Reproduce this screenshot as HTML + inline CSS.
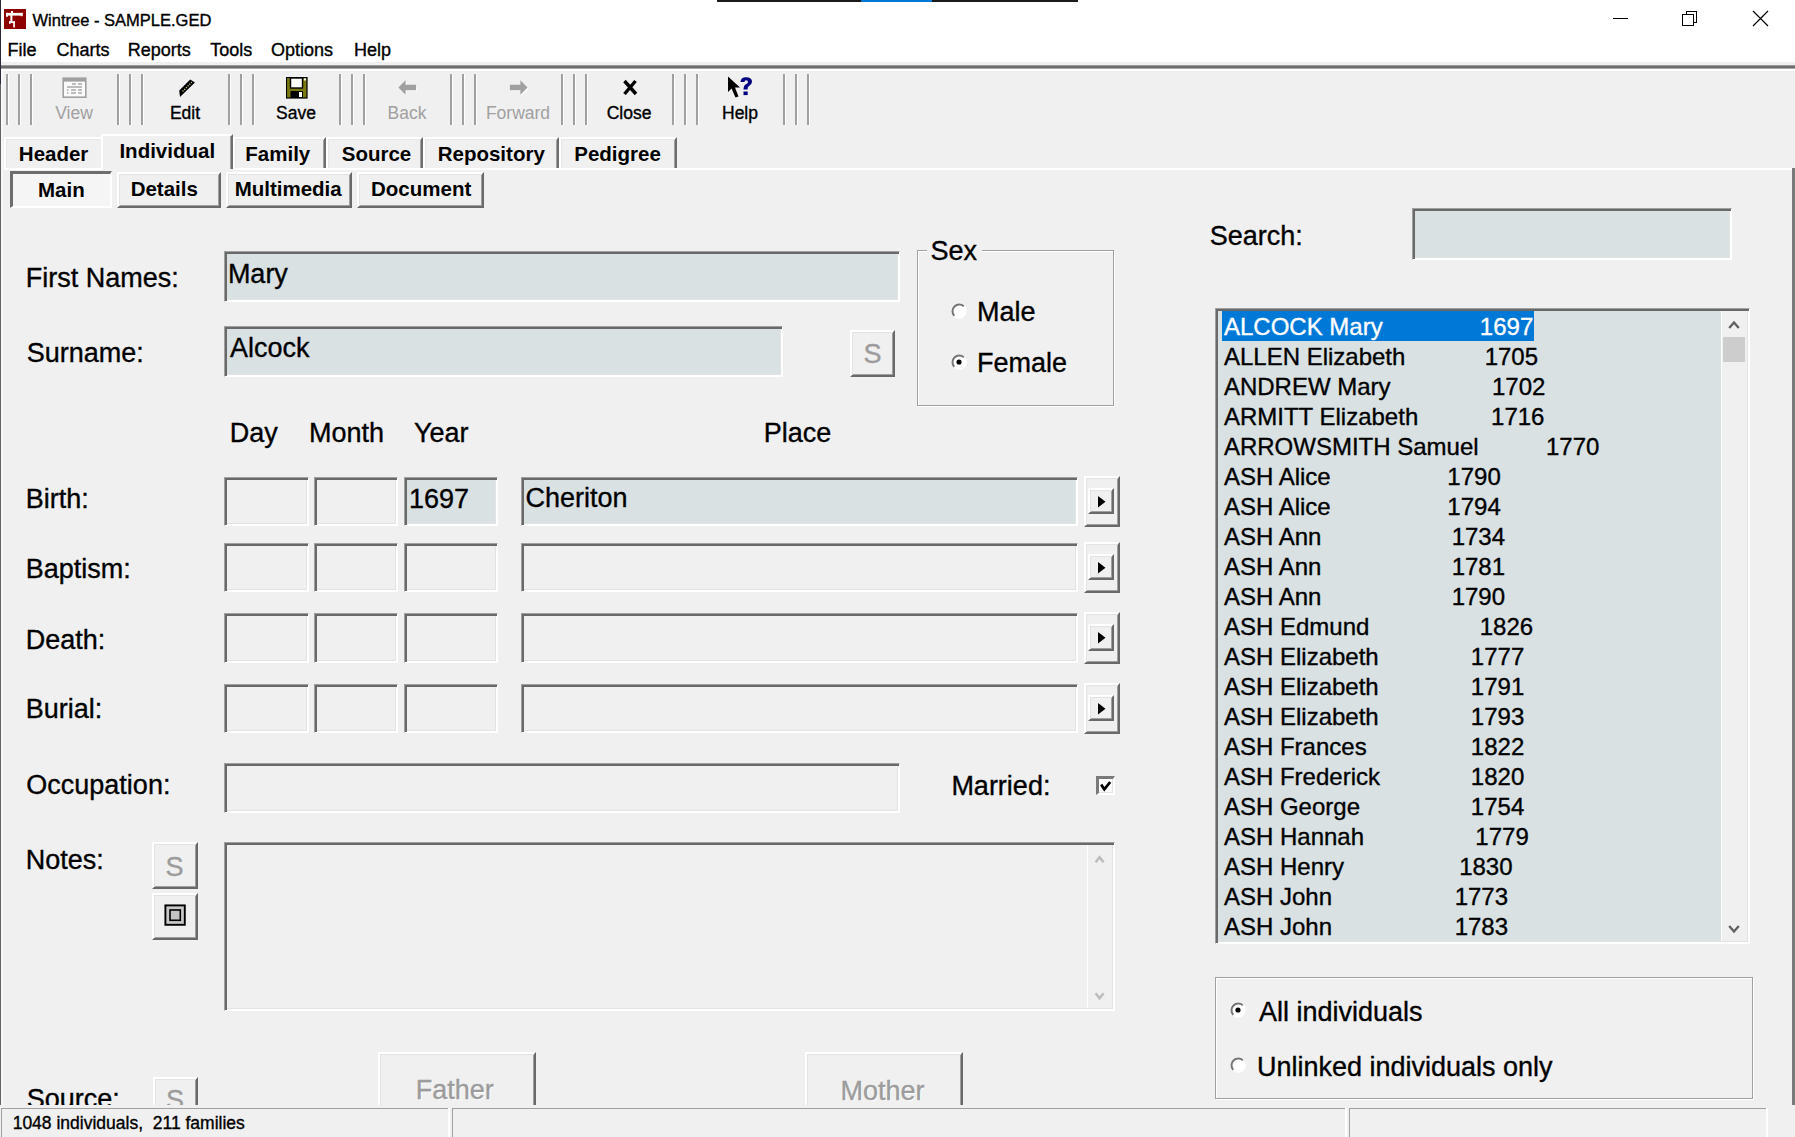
<!DOCTYPE html>
<html><head><meta charset="utf-8"><style>
*{box-sizing:border-box;margin:0;padding:0}
html,body{width:1795px;height:1137px;overflow:hidden}
body{position:relative;background:#f0f0f0;font-family:"Liberation Sans",sans-serif;color:#000}
.a{position:absolute}
.t{position:absolute;white-space:pre;line-height:1;-webkit-text-stroke:0.35px currentColor}
.sk{position:absolute;border:1px solid;border-color:#a0a0a0 #fff #fff #a0a0a0;box-shadow:inset 2px 2px 0 #696969,inset -1px -1px 0 #fff,inset -2px -2px 0 #e3e3e3}
.rs{position:absolute;border:2px solid;border-color:#fff #696969 #696969 #fff;box-shadow:inset 1px 1px 0 #e3e3e3,inset -1px -1px 0 #a0a0a0}
.grip{position:absolute;top:74px;width:2px;height:51px;background:#a0a0a0;box-shadow:1px 0 0 #fff}
</style></head><body>
<div class="a" style="left:0px;top:0px;width:1795px;height:62px;background:#fff"></div>
<div class="a" style="left:717px;top:0px;width:361px;height:2px;background:#1a1a1a"></div>
<div class="a" style="left:861px;top:0px;width:71px;height:2px;background:#0078d7"></div>
<div class="a" style="left:0px;top:65px;width:1795px;height:1px;background:#9a9a9a"></div>
<div class="a" style="left:0px;top:66px;width:1795px;height:2px;background:#6d6d6d"></div>
<div class="a" style="left:0px;top:68px;width:1795px;height:1px;background:#a8a8a8"></div>
<div class="a" style="left:0px;top:69px;width:1795px;height:2px;background:#fff"></div>
<div class="a" style="left:0px;top:0px;width:1px;height:84px;background:#2a2a3a"></div>
<div class="a" style="left:0px;top:84px;width:1px;height:1053px;background:#636363"></div>
<div class="a" style="left:1px;top:71px;width:2px;height:1034px;background:#f8f8f8"></div>
<div class="a" style="left:4px;top:9px;width:22px;height:20px;background:#8e0000"></div>
<svg class="a" style="left:4px;top:9px" width="22" height="20" viewBox="0 0 22 20" fill="#fff"><rect x="2" y="3.9" width="16.6" height="2.7"/><rect x="2" y="3.9" width="2" height="3.8"/><rect x="16.6" y="3.9" width="2" height="3.3"/><rect x="7" y="2" width="2" height="2.5"/><rect x="6.4" y="4" width="2" height="9.5"/><rect x="5" y="12.3" width="5.8" height="1.8"/><rect x="5" y="12.3" width="1.6" height="2.4"/><rect x="9.2" y="12.3" width="1.7" height="6.2"/></svg>
<div class="t" style="left:32.53px;top:12.00px;font-size:16.5px;">Wintree - SAMPLE.GED</div>
<div class="a" style="left:1613px;top:18px;width:15px;height:1px;background:#000"></div>
<div class="a" style="left:1686px;top:11px;width:11px;height:12px;border:1px solid #000"></div>
<div class="a" style="left:1682px;top:14px;width:12px;height:12px;border:1px solid #000;background:#fff"></div>
<svg class="a" style="left:1752px;top:10px" width="17" height="17" viewBox="0 0 17 17"><path d="M1 1L16 16M16 1L1 16" stroke="#000" stroke-width="1.2"/></svg>
<div class="t" style="left:7.42px;top:41.00px;font-size:18px;">File</div>
<div class="t" style="left:56.59px;top:41.00px;font-size:18px;">Charts</div>
<div class="t" style="left:127.72px;top:41.00px;font-size:18px;">Reports</div>
<div class="t" style="left:210.20px;top:41.00px;font-size:18px;">Tools</div>
<div class="t" style="left:271.05px;top:41.00px;font-size:18px;">Options</div>
<div class="t" style="left:353.92px;top:41.00px;font-size:18px;">Help</div>
<div class="grip" style="left:6px"></div>
<div class="grip" style="left:18px"></div>
<div class="grip" style="left:30px"></div>
<div class="grip" style="left:117px"></div>
<div class="grip" style="left:129px"></div>
<div class="grip" style="left:141px"></div>
<div class="grip" style="left:228px"></div>
<div class="grip" style="left:240px"></div>
<div class="grip" style="left:252px"></div>
<div class="grip" style="left:339px"></div>
<div class="grip" style="left:351px"></div>
<div class="grip" style="left:363px"></div>
<div class="grip" style="left:450px"></div>
<div class="grip" style="left:462px"></div>
<div class="grip" style="left:474px"></div>
<div class="grip" style="left:561px"></div>
<div class="grip" style="left:573px"></div>
<div class="grip" style="left:585px"></div>
<div class="grip" style="left:672px"></div>
<div class="grip" style="left:684px"></div>
<div class="grip" style="left:696px"></div>
<div class="grip" style="left:783px"></div>
<div class="grip" style="left:795px"></div>
<div class="grip" style="left:807px"></div>
<div class="t" style="left:-76px;width:300px;text-align:center;top:105.00px;font-size:17.5px;color:#a0a0a0;-webkit-text-stroke:0;">View</div>
<div class="t" style="left:35px;width:300px;text-align:center;top:105.00px;font-size:17.5px;">Edit</div>
<div class="t" style="left:146px;width:300px;text-align:center;top:105.00px;font-size:17.5px;">Save</div>
<div class="t" style="left:257px;width:300px;text-align:center;top:105.00px;font-size:17.5px;color:#a0a0a0;-webkit-text-stroke:0;">Back</div>
<div class="t" style="left:368px;width:300px;text-align:center;top:105.00px;font-size:17.5px;color:#a0a0a0;-webkit-text-stroke:0;">Forward</div>
<div class="t" style="left:479px;width:300px;text-align:center;top:105.00px;font-size:17.5px;">Close</div>
<div class="t" style="left:590px;width:300px;text-align:center;top:105.00px;font-size:17.5px;">Help</div>
<svg class="a" style="left:62px;top:77px" width="25" height="21" viewBox="0 0 25 21"><rect x="1.2" y="1.2" width="22.6" height="19" fill="#fafafa" stroke="#a0a0a0" stroke-width="1.6"/><rect x="1" y="1" width="23" height="3.6" fill="#a0a0a0"/><path d="M10 7H14M16 7H20M5 10H20M5 13H6.5M9 13H14M16 13H20M5 16H6.5M9 16H14M16 16H20" stroke="#a8a8a8" stroke-width="1.3"/></svg>
<svg class="a" style="left:170px;top:72px" width="30" height="30" viewBox="0 0 30 30"><path d="M9.2 18.6L20.2 7.6L24.9 10.4L14.6 20.4L10 24.9Z" fill="#000"/><path d="M12.6 19.4L21.8 10.2" stroke="#d8d890" stroke-width="1.3" stroke-dasharray="1.2 1.2"/></svg>
<svg class="a" style="left:286px;top:77px" width="22" height="22" viewBox="0 0 22 22"><rect x="0.5" y="0.5" width="20.5" height="20.5" fill="#7a7a10" stroke="#000" stroke-width="1.2"/><rect x="4.5" y="1" width="12" height="10" fill="#fff" stroke="#000" stroke-width="1.4"/><rect x="4.5" y="14" width="12.5" height="7" fill="#000"/><rect x="13" y="15" width="3" height="5" fill="#fff"/><rect x="18" y="1.5" width="2" height="2" fill="#fff"/></svg>
<svg class="a" style="left:397px;top:79px" width="22" height="18" viewBox="0 0 22 18"><path d="M2.4 9.6L9.6 2.2V6.7H20.1V12.2H9.6V16.7Z" fill="#fff"/><path d="M1.4 8.6L8.6 1.2V5.7H19.1V11.2H8.6V15.7Z" fill="#a0a0a0"/></svg>
<svg class="a" style="left:508px;top:79px" width="22" height="18" viewBox="0 0 22 18"><path d="M20.6 9.6L13.4 2.2V6.7H2.9V12.2H13.4V16.7Z" fill="#fff"/><path d="M19.6 8.6L12.4 1.2V5.7H1.9V11.2H12.4V15.7Z" fill="#a0a0a0"/></svg>
<svg class="a" style="left:620px;top:77px" width="20" height="20" viewBox="0 0 20 20"><path d="M4.5 4L16 17M15.5 4L4.5 17" stroke="#000" stroke-width="3.4"/></svg>
<svg class="a" style="left:726px;top:75px" width="30" height="25" viewBox="0 0 30 25"><path d="M2 1.5V17L5.5 13.5L9.5 22.5L12.5 21.5L9 12.5H14Z" fill="#000"/><path d="M14.5 7Q14.5 2.2 20 2.2Q26 2.2 26 6.8Q26 9.5 22.8 11.2Q21.5 12 21.5 14.5H17.5Q17.5 10.5 20 9.3Q22 8.3 22 6.8Q22 5.3 20 5.3Q18.5 5.3 18.5 7Z" fill="#000080"/><rect x="17.5" y="16.5" width="4.2" height="3.6" fill="#000080"/></svg>
<div class="a" style="left:4px;top:168px;width:98px;height:2px;background:#fff"></div>
<div class="a" style="left:233px;top:168px;width:1559px;height:2px;background:#fff"></div>
<div class="a" style="left:4px;top:137px;width:97px;height:31px;border-top:2px solid #fff;border-left:2px solid #fff;box-shadow:inset 1px 1px 0 #e6e6e6"></div>
<div class="a" style="left:101px;top:134px;width:132px;height:34px;border-top:2px solid #fff;border-left:2px solid #fff;border-right:2px solid #6e6e6e;height:35px;box-shadow:inset -1px 0 0 #a0a0a0"></div>
<div class="a" style="left:233px;top:137px;width:93px;height:31px;border-top:2px solid #fff;border-left:2px solid #fff;border-right:2px solid #6e6e6e;box-shadow:inset 1px 1px 0 #e6e6e6,inset -1px 0 0 #a0a0a0"></div>
<div class="a" style="left:326px;top:137px;width:97px;height:31px;border-top:2px solid #fff;border-left:2px solid #fff;border-right:2px solid #6e6e6e;box-shadow:inset 1px 1px 0 #e6e6e6,inset -1px 0 0 #a0a0a0"></div>
<div class="a" style="left:423px;top:137px;width:136px;height:31px;border-top:2px solid #fff;border-left:2px solid #fff;border-right:2px solid #6e6e6e;box-shadow:inset 1px 1px 0 #e6e6e6,inset -1px 0 0 #a0a0a0"></div>
<div class="a" style="left:559px;top:137px;width:118px;height:31px;border-top:2px solid #fff;border-left:2px solid #fff;border-right:2px solid #6e6e6e;box-shadow:inset 1px 1px 0 #e6e6e6,inset -1px 0 0 #a0a0a0"></div>
<div class="t" style="left:18.83px;top:144.00px;font-size:20.5px;font-weight:bold;-webkit-text-stroke:0;">Header</div>
<div class="t" style="left:119.43px;top:141.00px;font-size:20.5px;font-weight:bold;-webkit-text-stroke:0;">Individual</div>
<div class="t" style="left:245.33px;top:144.00px;font-size:20.5px;font-weight:bold;-webkit-text-stroke:0;">Family</div>
<div class="t" style="left:341.71px;top:144.00px;font-size:20.5px;font-weight:bold;-webkit-text-stroke:0;">Source</div>
<div class="t" style="left:437.73px;top:144.00px;font-size:20.5px;font-weight:bold;-webkit-text-stroke:0;">Repository</div>
<div class="t" style="left:574.23px;top:144.00px;font-size:20.5px;font-weight:bold;-webkit-text-stroke:0;">Pedigree</div>
<div class="a" style="left:10px;top:171px;width:102px;height:37px;border-style:solid;border-width:3px 2px 2px 3px;border-color:#6d6d6d #fff #fff #6d6d6d;background:#f5f5f5"></div>
<div class="rs" style="left:117px;top:172px;width:104px;height:36px;"></div>
<div class="rs" style="left:226px;top:172px;width:126px;height:36px;"></div>
<div class="rs" style="left:357px;top:172px;width:127px;height:36px;"></div>
<div class="t" style="left:38.03px;top:180.00px;font-size:20.5px;font-weight:bold;-webkit-text-stroke:0;">Main</div>
<div class="t" style="left:130.63px;top:179.00px;font-size:20.5px;font-weight:bold;-webkit-text-stroke:0;">Details</div>
<div class="t" style="left:234.63px;top:179.00px;font-size:20.5px;font-weight:bold;-webkit-text-stroke:0;">Multimedia</div>
<div class="t" style="left:371.03px;top:179.00px;font-size:20.5px;font-weight:bold;-webkit-text-stroke:0;">Document</div>
<div class="a" style="left:1792px;top:168px;width:3px;height:937px;background:#7a7a7a"></div>
<div class="t" style="left:25.79px;top:265.00px;font-size:27px;">First Names:</div>
<div class="sk" style="left:224px;top:251px;width:676px;height:51px;background:#d9e1e3"></div>
<div class="t" style="left:227.89px;top:261.00px;font-size:27px;">Mary</div>
<div class="t" style="left:26.77px;top:340.00px;font-size:27px;">Surname:</div>
<div class="sk" style="left:224px;top:326px;width:559px;height:51px;background:#d9e1e3"></div>
<div class="t" style="left:229.95px;top:335.00px;font-size:27px;">Alcock</div>
<div class="rs" style="left:850px;top:330px;width:45px;height:47px;"></div>
<div class="t" style="left:722.4px;width:300px;text-align:center;top:341.00px;font-size:27px;color:#9c9c9c;">S</div>
<div class="a" style="left:917px;top:250px;width:197px;height:156px;border:1px solid #a0a0a0;box-shadow:inset 1px 1px 0 #fff,1px 1px 0 #fff"></div>
<div class="a" style="left:927px;top:240px;width:55px;height:20px;background:#f0f0f0"></div>
<div class="t" style="left:930.57px;top:238.00px;font-size:27px;">Sex</div>
<svg class="a" style="left:950px;top:302px" width="18" height="18" viewBox="0 0 18 18"><circle cx="9" cy="9" r="7.8" fill="#fff"/><path d="M4.2 13.8A6.8 6.8 0 0 1 13.8 4.2" stroke="#767676" stroke-width="2" fill="none"/></svg>
<svg class="a" style="left:950px;top:353px" width="18" height="18" viewBox="0 0 18 18"><circle cx="9" cy="9" r="7.8" fill="#fff"/><path d="M4.2 13.8A6.8 6.8 0 0 1 13.8 4.2" stroke="#767676" stroke-width="2" fill="none"/><circle cx="9" cy="9" r="2.6" fill="#000"/></svg>
<div class="t" style="left:976.99px;top:299.00px;font-size:27px;">Male</div>
<div class="t" style="left:976.99px;top:350.00px;font-size:27px;">Female</div>
<div class="t" style="left:229.69px;top:420.00px;font-size:27px;">Day</div>
<div class="t" style="left:309.09px;top:420.00px;font-size:27px;">Month</div>
<div class="t" style="left:414.01px;top:420.00px;font-size:27px;">Year</div>
<div class="t" style="left:763.79px;top:420.00px;font-size:27px;">Place</div>
<div class="t" style="left:25.79px;top:486.00px;font-size:27px;">Birth:</div>
<div class="sk" style="left:224px;top:477px;width:85px;height:49px;background:#f0f0f0"></div>
<div class="sk" style="left:314px;top:477px;width:84px;height:49px;background:#f0f0f0"></div>
<div class="sk" style="left:404px;top:477px;width:94px;height:49px;background:#d9e1e3"></div>
<div class="sk" style="left:521px;top:477px;width:557px;height:49px;background:#d9e1e3"></div>
<div class="rs" style="left:1084px;top:476px;width:36px;height:51px;"></div>
<div class="rs" style="left:1088px;top:488px;width:26px;height:26px;"></div>
<svg class="a" style="left:1098px;top:496px" width="9" height="12" viewBox="0 0 9 12"><path d="M0 0L7.5 5.8L0 11.6Z" fill="#000"/></svg>
<div class="t" style="left:25.79px;top:556.00px;font-size:27px;">Baptism:</div>
<div class="sk" style="left:224px;top:543px;width:85px;height:49px;background:#f0f0f0"></div>
<div class="sk" style="left:314px;top:543px;width:84px;height:49px;background:#f0f0f0"></div>
<div class="sk" style="left:404px;top:543px;width:94px;height:49px;background:#f0f0f0"></div>
<div class="sk" style="left:521px;top:543px;width:557px;height:49px;background:#f0f0f0"></div>
<div class="rs" style="left:1084px;top:542px;width:36px;height:51px;"></div>
<div class="rs" style="left:1088px;top:554px;width:26px;height:26px;"></div>
<svg class="a" style="left:1098px;top:562px" width="9" height="12" viewBox="0 0 9 12"><path d="M0 0L7.5 5.8L0 11.6Z" fill="#000"/></svg>
<div class="t" style="left:25.79px;top:627.00px;font-size:27px;">Death:</div>
<div class="sk" style="left:224px;top:613px;width:85px;height:50px;background:#f0f0f0"></div>
<div class="sk" style="left:314px;top:613px;width:84px;height:50px;background:#f0f0f0"></div>
<div class="sk" style="left:404px;top:613px;width:94px;height:50px;background:#f0f0f0"></div>
<div class="sk" style="left:521px;top:613px;width:557px;height:50px;background:#f0f0f0"></div>
<div class="rs" style="left:1084px;top:612px;width:36px;height:52px;"></div>
<div class="rs" style="left:1088px;top:624px;width:26px;height:27px;"></div>
<svg class="a" style="left:1098px;top:632px" width="9" height="12" viewBox="0 0 9 12"><path d="M0 0L7.5 5.8L0 11.6Z" fill="#000"/></svg>
<div class="t" style="left:25.79px;top:696.00px;font-size:27px;">Burial:</div>
<div class="sk" style="left:224px;top:684px;width:85px;height:49px;background:#f0f0f0"></div>
<div class="sk" style="left:314px;top:684px;width:84px;height:49px;background:#f0f0f0"></div>
<div class="sk" style="left:404px;top:684px;width:94px;height:49px;background:#f0f0f0"></div>
<div class="sk" style="left:521px;top:684px;width:557px;height:49px;background:#f0f0f0"></div>
<div class="rs" style="left:1084px;top:683px;width:36px;height:51px;"></div>
<div class="rs" style="left:1088px;top:695px;width:26px;height:26px;"></div>
<svg class="a" style="left:1098px;top:703px" width="9" height="12" viewBox="0 0 9 12"><path d="M0 0L7.5 5.8L0 11.6Z" fill="#000"/></svg>
<div class="t" style="left:408.94px;top:486.00px;font-size:27px;">1697</div>
<div class="t" style="left:525.43px;top:485.00px;font-size:27px;">Cheriton</div>
<div class="t" style="left:26.32px;top:772.00px;font-size:27px;">Occupation:</div>
<div class="sk" style="left:224px;top:763px;width:676px;height:50px;background:#f0f0f0"></div>
<div class="t" style="left:951.39px;top:773.00px;font-size:27px;">Married:</div>
<div class="a" style="left:1096px;top:776px;width:19px;height:19px;background:#fff;border-style:solid;border-width:3px 2px 2px 3px;border-color:#7a7a7a #fff #fff #7a7a7a;box-shadow:inset -1px -1px 0 #e3e3e3"></div>
<svg class="a" style="left:1098px;top:779px" width="14" height="13" viewBox="0 0 14 13"><path d="M3.2 5.6L6.3 10.4L12.2 3" stroke="#000" stroke-width="2.8" fill="none" stroke-linejoin="miter"/></svg>
<div class="t" style="left:25.79px;top:847.00px;font-size:27px;">Notes:</div>
<div class="rs" style="left:152px;top:842px;width:46px;height:47px;"></div>
<div class="t" style="left:24.5px;width:300px;text-align:center;top:854.00px;font-size:27px;color:#9c9c9c;">S</div>
<div class="rs" style="left:152px;top:893px;width:46px;height:47px;"></div>
<svg class="a" style="left:163px;top:903px" width="24" height="24" viewBox="0 0 24 24"><rect x="2.4" y="2.4" width="19.4" height="19.4" fill="#c8c8c8" stroke="#000" stroke-width="1.9"/><rect x="7" y="7" width="10.3" height="10.3" fill="#c4c4c4" stroke="#000" stroke-width="1.6"/></svg>
<div class="sk" style="left:224px;top:842px;width:891px;height:169px;background:#f0f0f0"></div>
<div class="a" style="left:1087px;top:845px;width:1px;height:163px;background:#fff"></div>
<svg class="a" style="left:1092px;top:852px" width="16" height="14" viewBox="0 0 16 14"><path d="M3.6 10.2L7.6 5.2L11.6 10.2" stroke="#bcbcbc" stroke-width="2.5" fill="none"/></svg>
<svg class="a" style="left:1092px;top:988px" width="16" height="14" viewBox="0 0 16 14"><path d="M3.6 5.2L7.6 10.2L11.6 5.2" stroke="#bcbcbc" stroke-width="2.5" fill="none"/></svg>
<div class="a" style="left:0;top:0;width:1792px;height:1105px;overflow:hidden">
<div class="t" style="left:26.77px;top:1086.00px;font-size:27px;">Source:</div>
<div class="a" style="left:153px;top:1077px;width:45px;height:46px;border:2px solid;border-color:#fff #696969 #696969 #fff;box-shadow:inset 1px 1px 0 #e3e3e3,inset -1px -1px 0 #a0a0a0"></div>
<div class="t" style="left:25px;width:300px;text-align:center;top:1087.00px;font-size:27px;color:#9c9c9c;">S</div>
<div class="a" style="left:378px;top:1052px;width:158px;height:80px;border:2px solid;border-color:#fff #696969 #696969 #fff;box-shadow:inset 1px 1px 0 #e3e3e3,inset -1px -1px 0 #a0a0a0"></div>
<div class="t" style="left:415.79px;top:1077.00px;font-size:27px;color:#9c9c9c;text-shadow:1px 1px 0 #fff">Father</div>
<div class="a" style="left:805px;top:1052px;width:158px;height:80px;border:2px solid;border-color:#fff #696969 #696969 #fff;box-shadow:inset 1px 1px 0 #e3e3e3,inset -1px -1px 0 #a0a0a0"></div>
<div class="t" style="left:840.59px;top:1078.00px;font-size:27px;color:#9c9c9c;text-shadow:1px 1px 0 #fff">Mother</div>
</div>
<div class="t" style="left:1209.77px;top:223.00px;font-size:27px;">Search:</div>
<div class="sk" style="left:1412px;top:208px;width:320px;height:52px;background:#d9e1e3"></div>
<div class="sk" style="left:1215px;top:308px;width:535px;height:636px;background:#d9e1e3"></div>
<div class="a" style="left:1721px;top:311px;width:1px;height:630px;background:#fff"></div>
<div class="a" style="left:1722px;top:311px;width:25px;height:630px;background:#f0f0f0"></div>
<svg class="a" style="left:1728px;top:318px" width="12" height="12" viewBox="0 0 12 12"><path d="M1.2 10L6 4.5L10.8 10" stroke="#606060" stroke-width="2.3" fill="none"/></svg>
<div class="a" style="left:1723px;top:337px;width:22px;height:25px;background:#cdcdcd"></div>
<svg class="a" style="left:1728px;top:924px" width="12" height="12" viewBox="0 0 12 12"><path d="M1.2 2L6 7.5L10.8 2" stroke="#606060" stroke-width="2.3" fill="none"/></svg>
<div class="a" style="left:1222px;top:311px;width:312px;height:30px;background:#0078d7"></div>
<div class="t" style="left:1223.95px;top:315.00px;font-size:24px;color:#fff;">ALCOCK Mary</div>
<div class="t" style="left:1479.87px;top:315.00px;font-size:24px;color:#fff;">1697</div>
<div class="t" style="left:1223.95px;top:345.00px;font-size:24px;">ALLEN Elizabeth</div>
<div class="t" style="left:1484.67px;top:345.00px;font-size:24px;">1705</div>
<div class="t" style="left:1223.95px;top:375.00px;font-size:24px;">ANDREW Mary</div>
<div class="t" style="left:1491.97px;top:375.00px;font-size:24px;">1702</div>
<div class="t" style="left:1223.95px;top:405.00px;font-size:24px;">ARMITT Elizabeth</div>
<div class="t" style="left:1491.07px;top:405.00px;font-size:24px;">1716</div>
<div class="t" style="left:1223.95px;top:435.00px;font-size:24px;">ARROWSMITH Samuel</div>
<div class="t" style="left:1545.97px;top:435.00px;font-size:24px;">1770</div>
<div class="t" style="left:1223.95px;top:465.00px;font-size:24px;">ASH Alice</div>
<div class="t" style="left:1447.37px;top:465.00px;font-size:24px;">1790</div>
<div class="t" style="left:1223.95px;top:495.00px;font-size:24px;">ASH Alice</div>
<div class="t" style="left:1447.37px;top:495.00px;font-size:24px;">1794</div>
<div class="t" style="left:1223.95px;top:525.00px;font-size:24px;">ASH Ann</div>
<div class="t" style="left:1451.67px;top:525.00px;font-size:24px;">1734</div>
<div class="t" style="left:1223.95px;top:555.00px;font-size:24px;">ASH Ann</div>
<div class="t" style="left:1451.67px;top:555.00px;font-size:24px;">1781</div>
<div class="t" style="left:1223.95px;top:585.00px;font-size:24px;">ASH Ann</div>
<div class="t" style="left:1451.67px;top:585.00px;font-size:24px;">1790</div>
<div class="t" style="left:1223.95px;top:615.00px;font-size:24px;">ASH Edmund</div>
<div class="t" style="left:1479.77px;top:615.00px;font-size:24px;">1826</div>
<div class="t" style="left:1223.95px;top:645.00px;font-size:24px;">ASH Elizabeth</div>
<div class="t" style="left:1470.87px;top:645.00px;font-size:24px;">1777</div>
<div class="t" style="left:1223.95px;top:675.00px;font-size:24px;">ASH Elizabeth</div>
<div class="t" style="left:1470.87px;top:675.00px;font-size:24px;">1791</div>
<div class="t" style="left:1223.95px;top:705.00px;font-size:24px;">ASH Elizabeth</div>
<div class="t" style="left:1470.87px;top:705.00px;font-size:24px;">1793</div>
<div class="t" style="left:1223.95px;top:735.00px;font-size:24px;">ASH Frances</div>
<div class="t" style="left:1470.87px;top:735.00px;font-size:24px;">1822</div>
<div class="t" style="left:1223.95px;top:765.00px;font-size:24px;">ASH Frederick</div>
<div class="t" style="left:1470.87px;top:765.00px;font-size:24px;">1820</div>
<div class="t" style="left:1223.95px;top:795.00px;font-size:24px;">ASH George</div>
<div class="t" style="left:1470.87px;top:795.00px;font-size:24px;">1754</div>
<div class="t" style="left:1223.95px;top:825.00px;font-size:24px;">ASH Hannah</div>
<div class="t" style="left:1475.37px;top:825.00px;font-size:24px;">1779</div>
<div class="t" style="left:1223.95px;top:855.00px;font-size:24px;">ASH Henry</div>
<div class="t" style="left:1459.17px;top:855.00px;font-size:24px;">1830</div>
<div class="t" style="left:1223.95px;top:885.00px;font-size:24px;">ASH John</div>
<div class="t" style="left:1454.67px;top:885.00px;font-size:24px;">1773</div>
<div class="t" style="left:1223.95px;top:915.00px;font-size:24px;">ASH John</div>
<div class="t" style="left:1454.67px;top:915.00px;font-size:24px;">1783</div>
<div class="a" style="left:1215px;top:977px;width:538px;height:122px;border:1px solid #a0a0a0;box-shadow:inset 1px 1px 0 #fff,1px 1px 0 #fff"></div>
<svg class="a" style="left:1229px;top:1001px" width="18" height="18" viewBox="0 0 18 18"><circle cx="9" cy="9" r="7.8" fill="#fff"/><path d="M4.2 13.8A6.8 6.8 0 0 1 13.8 4.2" stroke="#767676" stroke-width="2" fill="none"/><circle cx="9" cy="9" r="2.6" fill="#000"/></svg>
<svg class="a" style="left:1229px;top:1056px" width="18" height="18" viewBox="0 0 18 18"><circle cx="9" cy="9" r="7.8" fill="#fff"/><path d="M4.2 13.8A6.8 6.8 0 0 1 13.8 4.2" stroke="#767676" stroke-width="2" fill="none"/></svg>
<div class="t" style="left:1258.95px;top:999.00px;font-size:27px;">All individuals</div>
<div class="t" style="left:1256.92px;top:1054.00px;font-size:27px;">Unlinked individuals only</div>
<div class="a" style="left:0px;top:1105px;width:1795px;height:32px;background:#f0f0f0"></div>
<div class="a" style="left:1px;top:1108px;width:447px;height:29px;border-top:1px solid #a0a0a0;border-left:1px solid #a0a0a0"></div>
<div class="a" style="left:448px;top:1108px;width:2px;height:29px;background:#fff"></div>
<div class="a" style="left:452px;top:1108px;width:893px;height:29px;border-top:1px solid #a0a0a0;border-left:1px solid #a0a0a0"></div>
<div class="a" style="left:1345px;top:1108px;width:2px;height:29px;background:#fff"></div>
<div class="a" style="left:1349px;top:1108px;width:417px;height:29px;border-top:1px solid #a0a0a0;border-left:1px solid #a0a0a0"></div>
<div class="a" style="left:1766px;top:1108px;width:2px;height:29px;background:#fff"></div>
<div class="t" style="left:12.67px;top:1115.00px;font-size:17.5px;">1048 individuals,  211 families</div>
</body></html>
